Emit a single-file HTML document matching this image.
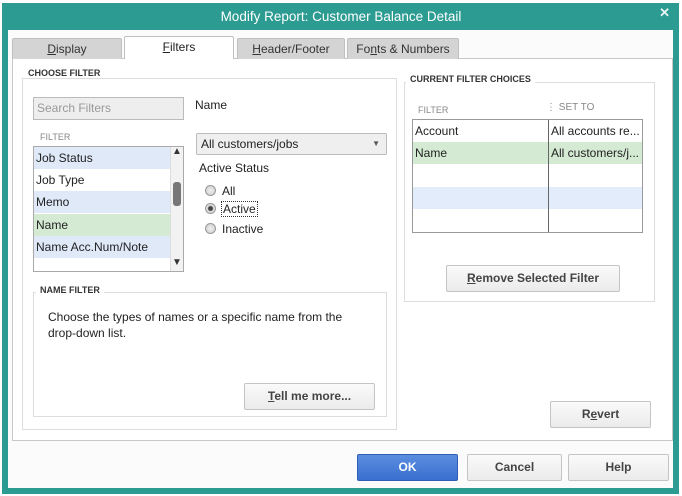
<!DOCTYPE html>
<html><head><meta charset="utf-8"><style>
*{box-sizing:border-box;margin:0;padding:0}
body{width:682px;height:496px;background:#fff;font-family:"Liberation Sans",Arial,sans-serif;font-size:12px;color:#222;position:relative;overflow:hidden}
.a{position:absolute}
.win{left:2px;top:3px;width:677px;height:491px;background:#2c9b91;}
.inner{left:8px;top:30px;width:665px;height:458px;background:#fbfbfb}
.title{left:0;top:3px;width:682px;height:27px;text-align:center;color:#fff;font-size:13.5px;line-height:27px}
.tab{top:38px;height:21px;background:#d4d4d4;border:1px solid #c0c0c0;border-bottom:none;text-align:center;line-height:20px;font-size:12px;color:#333;border-radius:2px 2px 0 0}
.panel{left:12px;top:58px;width:661px;height:383px;border:1px solid #c8c8c8;background:#fff}
.grp{border:1px solid #ddd;background:#fff}
.lbl{font-size:9px;font-weight:bold;color:#333;background:#fff;padding:0 4px}
.row{position:absolute;left:0;width:136px;height:22px;line-height:22px;padding-left:2px;font-size:12px}
.btn{border:1px solid #c4c4c4;border-radius:2px;background:linear-gradient(#fafafa,#ebebeb);text-align:center;font-size:12px;font-weight:bold;color:#444}
.radio{width:11px;height:11px;border-radius:50%;border:1px solid #999;background:radial-gradient(#eee,#ccc)}
u{text-decoration:underline}
</style></head><body>
<div class="a win"></div>
<div class="a title">Modify Report: Customer Balance Detail</div>
<div class="a" style="right:12px;top:5px;color:#e6f4f2;font-weight:bold;font-size:13px">✕</div>
<div class="a inner"></div>
<div class="a panel"></div>
<div class="a tab" style="left:12px;width:110px"><u>D</u>isplay</div>
<div class="a tab" style="left:124px;top:36px;height:23px;width:110px;background:#fff;color:#222"><u>F</u>ilters</div>
<div class="a tab" style="left:237px;width:108px"><u>H</u>eader/Footer</div>
<div class="a tab" style="left:347px;width:112px">Fo<u>n</u>ts &amp; Numbers</div>

<div class="a grp" style="left:22px;top:78px;width:375px;height:352px"></div>
<div class="a lbl" style="left:24px;top:68px">CHOOSE FILTER</div>
<div class="a" style="left:33px;top:97px;width:151px;height:23px;border:1px solid #bbb;background:#eee;color:#999;line-height:21px;padding-left:3px">Search Filters</div>
<div class="a" style="left:40px;top:132px;font-size:9px;color:#888">FILTER</div>
<div class="a" style="left:33px;top:146px;width:151px;height:126px;border:1px solid #aaa;background:#fff;overflow:hidden">
<div class="row" style="top:0;background:#dfe9f8">Job Status</div>
<div class="row" style="top:22px">Job Type</div>
<div class="row" style="top:44px;background:#dfe9f8">Memo</div>
<div class="row" style="top:67px;background:#d4ead3">Name</div>
<div class="row" style="top:89px;background:#dfe9f8">Name Acc.Num/Note</div>
<div class="a" style="left:136px;top:0;width:14px;height:124px;background:#f2f2f2;border-left:1px solid #ddd"></div>
<div class="a" style="left:138px;top:-1px;font-size:10px;color:#333">▲</div>
<div class="a" style="left:139px;top:35px;width:8px;height:24px;background:#777;border-radius:3px"></div>
<div class="a" style="left:138px;top:110px;font-size:10px;color:#333">▼</div>
</div>
<div class="a" style="left:195px;top:98px;font-size:12px">Name</div>
<div class="a" style="left:196px;top:133px;width:191px;height:22px;border:1px solid #bbb;border-radius:2px;background:#efefef;line-height:20px;padding-left:4px">All customers/jobs<span style="position:absolute;right:6px;font-size:8px;color:#555">▼</span></div>
<div class="a" style="left:199px;top:161px">Active Status</div>
<div class="a radio" style="left:205px;top:185px"></div><div class="a" style="left:222px;top:184px">All</div>
<div class="a radio" style="left:205px;top:203px;background:radial-gradient(circle,#444 0 2px,#ddd 3px)"></div><div class="a" style="left:221px;top:201px;border:1px dotted #333;padding:0 1px">Active</div>
<div class="a radio" style="left:205px;top:223px"></div><div class="a" style="left:222px;top:222px">Inactive</div>

<div class="a grp" style="left:33px;top:292px;width:354px;height:125px"></div>
<div class="a lbl" style="left:36px;top:285px">NAME FILTER</div>
<div class="a" style="left:48px;top:309px;line-height:16px;font-size:12px">Choose the types of names or a specific name from the<br>drop-down list.</div>
<div class="a btn" style="left:244px;top:383px;width:131px;height:27px;line-height:25px"><u>T</u>ell me more...</div>

<div class="a grp" style="left:404px;top:82px;width:251px;height:220px"></div>
<div class="a lbl" style="left:406px;top:74px">CURRENT FILTER CHOICES</div>
<div class="a" style="left:418px;top:105px;font-size:9px;color:#888">FILTER</div>
<div class="a" style="left:546px;top:102px;font-size:10px;color:#888">⋮ SET TO</div>
<div class="a" style="left:412px;top:119px;width:231px;height:114px;border:1px solid #999;background:#fff;overflow:hidden">
<div class="a" style="left:0;top:0;width:229px;height:22px;line-height:22px;padding-left:2px">Account</div>
<div class="a" style="left:0;top:22px;width:229px;height:22px;line-height:22px;padding-left:2px;background:#d4ead3">Name</div>
<div class="a" style="left:0;top:67px;width:229px;height:22px;background:#e2ecfa"></div>
<div class="a" style="left:135px;top:0;width:1px;height:112px;background:#666"></div>
<div class="a" style="left:138px;top:0;line-height:22px">All accounts re...</div>
<div class="a" style="left:138px;top:22px;line-height:22px">All customers/j...</div>
</div>
<div class="a btn" style="left:446px;top:265px;width:174px;height:27px;line-height:25px"><u>R</u>emove Selected Filter</div>
<div class="a btn" style="left:550px;top:401px;width:101px;height:27px;line-height:25px">R<u>e</u>vert</div>

<div class="a" style="left:357px;top:454px;width:101px;height:27px;border:1px solid #2f5fb5;border-radius:2px;background:linear-gradient(#5b8ee0,#3a6fcf);color:#fff;text-align:center;line-height:25px;font-weight:bold">OK</div>
<div class="a btn" style="left:467px;top:454px;width:95px;height:27px;line-height:25px">Cancel</div>
<div class="a btn" style="left:568px;top:454px;width:101px;height:27px;line-height:25px">Help</div>
</body></html>
